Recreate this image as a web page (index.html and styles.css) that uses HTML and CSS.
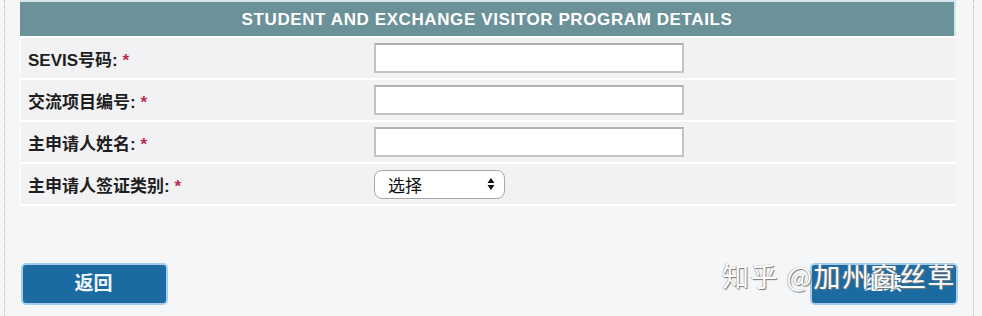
FILE: index.html
```html
<!DOCTYPE html>
<html lang="zh">
<head>
<meta charset="utf-8">
<title>SEVP Details</title>
<link rel="stylesheet" href="styles.css">
</head>
<body>
<div class="page">
  <div class="panel">
    <div class="header">STUDENT AND EXCHANGE VISITOR PROGRAM DETAILS</div>
    <div class="rows">
      <div class="row">
        <div class="label">SEVIS号码: <span class="req">*</span></div>
        <div class="field"><div class="input"></div></div>
      </div>
      <div class="row">
        <div class="label">交流项目编号: <span class="req">*</span></div>
        <div class="field"><div class="input"></div></div>
      </div>
      <div class="row">
        <div class="label">主申请人姓名: <span class="req">*</span></div>
        <div class="field"><div class="input"></div></div>
      </div>
      <div class="row">
        <div class="label">主申请人签证类别: <span class="req">*</span></div>
        <div class="field">
          <div class="select">
            <span class="select-text">选择</span>
            <svg class="arrows" width="8" height="14" viewBox="0 0 8 14"><path d="M4 1 L7.5 6 H0.5 Z M4 13 L7.5 8 H0.5 Z" fill="#111"/></svg>
          </div>
        </div>
      </div>
    </div>
    <div class="actions">
      <div class="btn">返回</div>
      <div class="btn btn-next">继续</div>
    </div>
  </div>
  <div class="watermark">知乎 @加州窗丝草</div>
</div>
</body>
</html>
```
FILE: styles.css
```css
html, body {
  margin: 0;
  padding: 0;
  background: #f5f6f8;
}
body {
  font-family: "Liberation Sans", "Noto Sans CJK SC", sans-serif;
  width: 982px;
  height: 316px;
  overflow: hidden;
}
.page {
  position: relative;
  height: 316px;
  padding: 0 0 0 4px;
}
.panel {
  height: 316px;
  border-left: 1px dotted #b8b8bc;
  border-right: 1px dotted #b8b8bc;
  padding: 0 17px 0 15px;
  box-sizing: border-box;
  width: 970px;
}
.header {
  height: 34px;
  border-top: 2px solid #d4e6ea;
  border-right: 2px solid #d4e6ea;
  background: #6b9199;
  color: #ffffff;
  font-weight: bold;
  font-size: 17px;
  line-height: 35px;
  text-align: center;
  letter-spacing: 0.6px;
}
.rows {
  display: flex;
  flex-direction: column;
  gap: 2px;
  background: #ffffff;
  padding: 2px 0 2px 1px;
}
.row {
  display: flex;
  align-items: center;
  height: 40px;
  background: #f2f2f4;
}
.label {
  width: 353px;
  box-sizing: border-box;
  padding-left: 7px;
  font-weight: bold;
  font-size: 17px;
  color: #1e1e1e;
}
.req {
  color: #b8304e;
}
.field {
  display: flex;
  align-items: center;
}
.input {
  width: 306px;
  height: 26px;
  background: #ffffff;
  border: 2px solid #c4c4c6;
  border-top-color: #b0b0b2;
}
.select {
  border: 1.5px solid #a8a8aa;
  border-radius: 8px;
  background: #ffffff;
  display: flex;
  align-items: center;
  justify-content: space-between;
  padding: 0 9px 0 13px;
  box-sizing: border-box;
  width: 131px;
  height: 29px;
}
.select-text {
  font-size: 17px;
  color: #111;
}
.actions {
  display: flex;
  justify-content: space-between;
  margin-top: 57px;
  margin-right: -2px;
  padding-left: 1px;
}
.btn {
  width: 143px;
  height: 38px;
  background: #1b6aa2;
  border: 2px solid #a6cdec;
  border-radius: 5px;
  color: #eef6ff;
  font-size: 19px;
  font-weight: bold;
  line-height: 38px;
  text-align: center;
  text-indent: -2px;
}
.btn-next {
  width: 144px;
}
.watermark {
  position: absolute;
  left: 722px;
  top: 256px;
  font-size: 27px;
  color: #ffffff;
  font-family: "Noto Sans CJK SC", sans-serif;
  text-shadow: 1px 1px 1px #7a7a7a, -0.5px -0.5px 1px #9a9a9a;
  letter-spacing: 1.5px;
  white-space: nowrap;
}
```
